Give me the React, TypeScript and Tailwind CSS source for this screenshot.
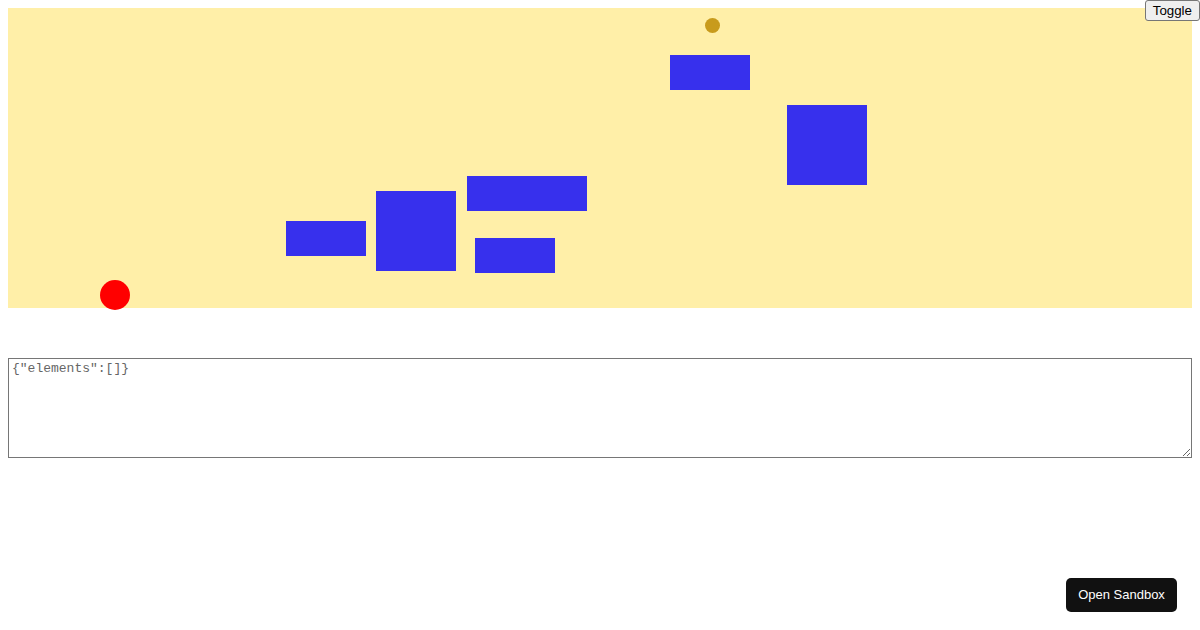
import { useState } from 'react';

const boxes = [
    { left: 662, top: 47, w: 80, h: 35 },
    { left: 779, top: 97, w: 80, h: 80 },
    { left: 459, top: 168, w: 120, h: 35 },
    { left: 368, top: 183, w: 80, h: 80 },
    { left: 278, top: 213, w: 80, h: 35 },
    { left: 467, top: 230, w: 80, h: 35 },
];

export default function App() {
    const [on, setOn] = useState(false);
    const [json, setJson] = useState('{"elements":[]}');

    return (
        <div className="relative min-h-[630px] bg-white p-2 font-['Liberation_Sans',Arial,sans-serif]">
            <button
                onClick={() => setOn(!on)}
                className="absolute top-0 right-0 z-10 h-[21px] rounded-[3px] border border-[#767676] bg-[#efefef] px-[7px] text-[13.33px] leading-[19px] text-black"
            >
                Toggle
            </button>

            {/* canvas */}
            <div className="relative h-[300px] bg-[#ffefa8]">
                {boxes.map((b, i) => (
                    <div
                        key={i}
                        className="absolute bg-[#3730ed]"
                        style={{ left: b.left, top: b.top, width: b.w, height: b.h }}
                    />
                ))}
                <div className="absolute left-[697px] top-[10px] h-[15px] w-[15px] rounded-full bg-[#c89b1c]" />
                <div className="absolute left-[92px] top-[272px] h-[30px] w-[30px] rounded-full bg-[#ff0000]" />
            </div>

            <textarea
                value={json}
                onChange={e => setJson(e.target.value)}
                className="mt-[50px] block h-[100px] w-full border border-[#767676] px-[3px] py-[2px] font-['Liberation_Mono','Courier_New',monospace] text-[13px] leading-[16px] text-[#666] outline-none"
            />

            <button className="fixed right-[23px] bottom-[18px] h-[34px] w-[111px] rounded-[5px] bg-[#111] text-[13px] text-white">
                Open Sandbox
            </button>
        </div>
    );
}
